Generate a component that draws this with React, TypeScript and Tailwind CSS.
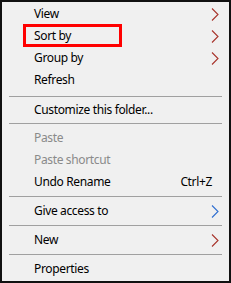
import type { ReactNode } from "react";

type Tone = "red" | "blue";

function Chevron({ tone }: { tone: Tone }) {
  return (
    <svg width="8" height="13" viewBox="0 0 8 13" className="shrink-0">
      <polyline
        points="1,0.5 7,6.5 1,12.5"
        fill="none"
        stroke={tone === "red" ? "#a8332b" : "#2f6fd0"}
        strokeWidth="1.1"
      />
    </svg>
  );
}

function Item({
  label,
  disabled,
  shortcut,
  sub,
}: {
  label: ReactNode;
  disabled?: boolean;
  shortcut?: string;
  sub?: Tone;
}) {
  return (
    <div className={`flex h-[22px] items-center pl-[32px] ${shortcut ? "pr-[17px]" : "pr-[10px]"}`}>
      <span className={disabled ? "flex-1 text-[#8a8a8a]" : "flex-1 text-black"}>{label}</span>
      {shortcut && <span className="text-black">{shortcut}</span>}
      {sub && <Chevron tone={sub} />}
    </div>
  );
}

function Sep({ className }: { className: string }) {
  return <div className={`mx-[7px] h-px bg-[#a0a0a0] ${className}`} />;
}

export default function App() {
  return (
    <div className="h-[283px] w-[231px] border-2 border-[#111] bg-[#f0f0f0] pt-px text-[12px] tracking-[-0.35px] font-['Noto_Sans',sans-serif]">
      <Item label="View" sub="red" />
      <div className="relative">
        <Item label="Sort by" sub="red" />
        <div className="absolute left-[21px] top-[-1px] h-[23px] w-[99px] border-[3px] border-[#ff0000]" />
      </div>
      <Item label="Group by" sub="red" />
      <Item label="Refresh" />
      <Sep className="mt-[5px] mb-[2px]" />
      <Item label="Customize this folder..." />
      <Sep className="mt-[2px] mb-[3px]" />
      <Item label="Paste" disabled />
      <Item label="Paste shortcut" disabled />
      <Item label="Undo Rename" shortcut="Ctrl+Z" />
      <Sep className="mt-[3px] mb-[3px]" />
      <Item label="Give access to" sub="blue" />
      <Sep className="mt-[3px] mb-[3px]" />
      <Item label="New" sub="red" />
      <Sep className="mt-[3px] mb-[3px]" />
      <Item label="Properties" />
    </div>
  );
}
